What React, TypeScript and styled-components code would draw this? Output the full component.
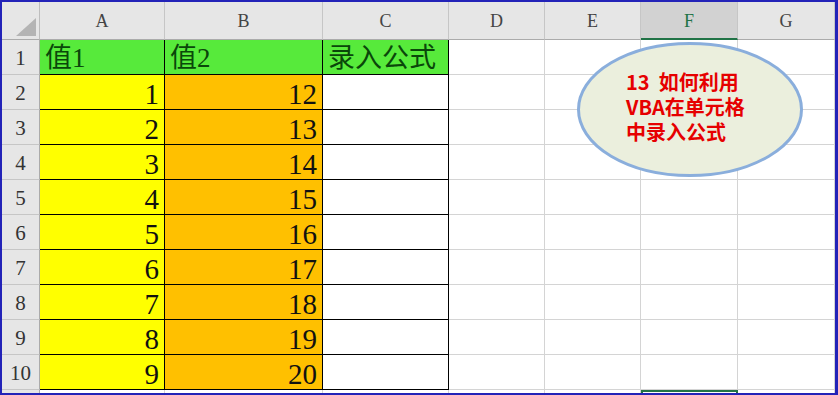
import React from 'react';
import styled, { createGlobalStyle } from 'styled-components';

const GlobalStyle = createGlobalStyle`
  html, body {
    margin: 0;
    padding: 0;
    background: #ffffff;
  }
`;

const columns = ['A', 'B', 'C', 'D', 'E', 'F', 'G'];
const widths = [38, 125, 158, 126, 96, 96, 97, 97];

const Frame = styled.div`
  width: 838px;
  height: 395px;
  box-sizing: border-box;
  border: 2px solid #2323b8;
  border-right-width: 3px;
  overflow: hidden;
`;

const Sheet = styled.div`
  position: relative;
  display: grid;
  grid-template-columns: ${widths.map((w) => `${w}px`).join(' ')};
  grid-template-rows: 38px repeat(10, 35px) 3px;
`;

const Corner = styled.div`
  position: relative;
  box-sizing: border-box;
  background: #e6e6e6;
  border-right: 1px solid #bdbdbd;
  border-bottom: 1px solid #ababab;

  svg {
    position: absolute;
    left: 14px;
    top: 16px;
  }
`;

const ColHead = styled.div<{ $active?: boolean }>`
  box-sizing: border-box;
  display: flex;
  align-items: center;
  justify-content: center;
  padding-top: 2px;
  background: ${(p) => (p.$active ? '#d2d2d2' : '#e6e6e6')};
  border-right: 1px solid #c6c6c6;
  border-bottom: ${(p) => (p.$active ? '2px solid #217346' : '1px solid #ababab')};
  color: ${(p) => (p.$active ? '#217346' : '#444444')};
  font-family: 'Liberation Serif', serif;
  font-size: 18px;
`;

const RowHead = styled.div`
  box-sizing: border-box;
  display: flex;
  align-items: center;
  justify-content: center;
  padding-top: 3px;
  background: #e6e6e6;
  border-right: 1px solid #ababab;
  border-bottom: 1px solid #c6c6c6;
  color: #333333;
  font-family: 'Liberation Serif', serif;
  font-size: 21px;
`;

const Cell = styled.div<{ $fill?: string; $boxed?: boolean; $head?: boolean }>`
  box-sizing: border-box;
  display: flex;
  align-items: flex-end;
  justify-content: ${(p) => (p.$head ? 'flex-start' : 'flex-end')};
  padding: ${(p) => (p.$head ? '0 0 0 5px' : '0 5px 0 0')};
  background: ${(p) => p.$fill || '#ffffff'};
  border-right: 1px solid ${(p) => (p.$boxed ? '#000000' : '#d4d4d4')};
  border-bottom: 1px solid ${(p) => (p.$boxed ? '#000000' : '#d4d4d4')};
  color: ${(p) => (p.$head ? '#0a470a' : '#111111')};
  font-family: 'Liberation Serif', 'Noto Sans CJK SC', serif;
  font-size: ${(p) => (p.$head ? '27px' : '29px')};
  line-height: ${(p) => (p.$head ? '32px' : '29px')};
  white-space: nowrap;
`;

const Tail = styled.div<{ $selected?: boolean; $head?: boolean }>`
  box-sizing: border-box;
  background: ${(p) => (p.$head ? '#e6e6e6' : '#ffffff')};
  border-right: 1px solid ${(p) => (p.$head ? '#ababab' : '#d4d4d4')};
  ${(p) => p.$selected && 'border: 2px solid #217346; border-bottom: none;'}
`;

const Callout = styled.div`
  position: absolute;
  left: 575px;
  top: 40px;
  width: 226px;
  height: 135px;
`;

const CalloutText = styled.div`
  position: absolute;
  left: 49px;
  top: 27px;
  color: #e60000;
  font-family: 'Noto Sans CJK SC', 'Noto Sans', sans-serif;
  font-weight: 700;
  font-size: 20px;
  line-height: 25px;
  white-space: pre;
`;

const GREEN = '#57ea3b';
const YELLOW = '#ffff00';
const ORANGE = '#ffc000';

export default function App() {
  const rows = Array.from({ length: 9 }, (_, i) => i + 1);
  return (
    <>
      <GlobalStyle />
      <Frame>
        <Sheet>
          <Corner>
            <svg width="20" height="18" viewBox="0 0 20 18">
              <polygon points="20,0 20,18 0,18" fill="#b4b4b4" />
            </svg>
          </Corner>
          {columns.map((c) => (
            <ColHead key={c} $active={c === 'F'}>
              {c}
            </ColHead>
          ))}

          <RowHead>1</RowHead>
          <Cell $fill={GREEN} $boxed $head>
            值1
          </Cell>
          <Cell $fill={GREEN} $boxed $head>
            值2
          </Cell>
          <Cell $fill={GREEN} $boxed $head>
            录入公式
          </Cell>
          <Cell />
          <Cell />
          <Cell />
          <Cell />

          {rows.map((n) => (
            <React.Fragment key={n}>
              <RowHead>{n + 1}</RowHead>
              <Cell $fill={YELLOW} $boxed>
                {n}
              </Cell>
              <Cell $fill={ORANGE} $boxed>
                {n + 11}
              </Cell>
              <Cell $boxed />
              <Cell />
              <Cell />
              <Cell />
              <Cell />
            </React.Fragment>
          ))}

          <Tail $head />
          <Tail />
          <Tail />
          <Tail />
          <Tail />
          <Tail />
          <Tail $selected />
          <Tail />

          <Callout>
            <svg width="226" height="135" viewBox="0 0 226 135">
              <ellipse
                cx="113"
                cy="67.5"
                rx="111.5"
                ry="66"
                fill="#ebefdd"
                stroke="#8aaedc"
                strokeWidth="3"
              />
            </svg>
            <CalloutText>{'13  如何利用\nVBA在单元格\n中录入公式'}</CalloutText>
          </Callout>
        </Sheet>
      </Frame>
    </>
  );
}
